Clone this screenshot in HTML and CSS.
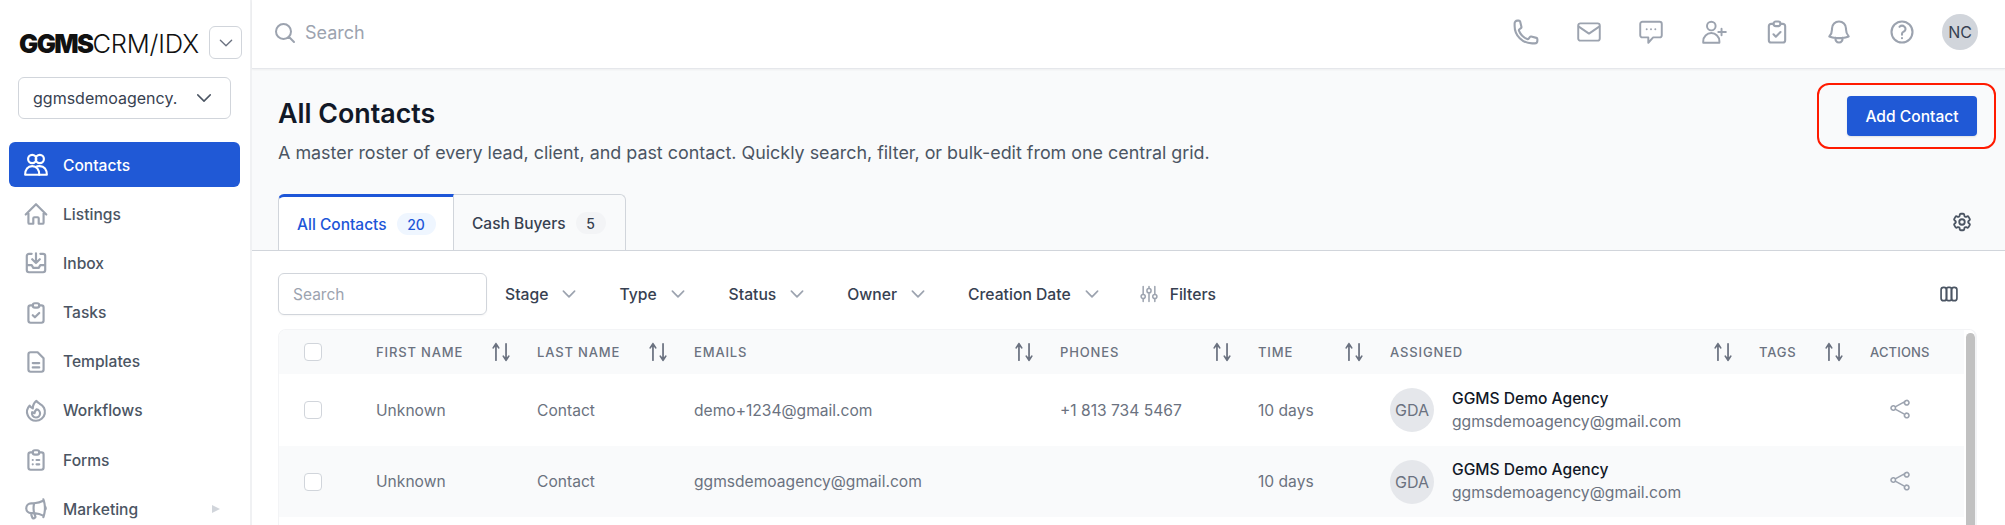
FILE: index.html
```html
<!DOCTYPE html>
<html lang="en">
<head>
<meta charset="utf-8">
<title>All Contacts</title>
<link rel="stylesheet" href="styles.css">
</head>
<body>
<svg class="sprite" aria-hidden="true">
  <symbol id="i-chev" viewBox="0 0 24 24"><path d="M4.500 8.250 12 15.750l7.500-7.500"/></symbol>
  <symbol id="i-users" viewBox="0 0 24 24"><circle cx="8.500" cy="6.500" r="3.800"/><circle cx="15.500" cy="6.500" r="3.800"/><path d="M2 21c0-5 2.500-8 6.500-8s6.500 3 6.500 8z"/><path d="M13 13.200c.8-.2 1.600-.2 2.500-.2 4 0 6.500 3 6.500 8h-7"/></symbol>
  <symbol id="i-home" viewBox="0 0 24 24"><path d="M2.500 12.500 12 3l9.500 9.500M5 10v10a1 1 0 0 0 1 1h3.500v-5a1 1 0 0 1 1-1h3a1 1 0 0 1 1 1v5H18a1 1 0 0 0 1-1V10"/></symbol>
  <symbol id="i-inbox" viewBox="0 0 24 24"><path d="M8 3.500H5.500a2 2 0 0 0-2 2v13a2 2 0 0 0 2 2h13a2 2 0 0 0 2-2v-13a2 2 0 0 0-2-2H16M3.500 14H8l1.500 2.500h5L16 14h4.500M12 3v9m0 0-3.500-3.500M12 12l3.500-3.500"/></symbol>
  <symbol id="i-tasks" viewBox="0 0 24 24"><path d="M9 5H7a2 2 0 0 0-2 2v12a2 2 0 0 0 2 2h10a2 2 0 0 0 2-2V7a2 2 0 0 0-2-2h-2"/><rect x="9" y="3" width="6" height="4" rx="2"/><path d="m9 14 2 2 4-4"/></symbol>
  <symbol id="i-doc" viewBox="0 0 24 24"><path d="M7 3h6.500L19 8.500V19a2 2 0 0 1-2 2H7a2 2 0 0 1-2-2V5a2 2 0 0 1 2-2z"/><path d="M9 13h6M9 17h6"/></symbol>
  <symbol id="i-fire" viewBox="0 0 24 24"><path d="M15.362 5.214A8.252 8.252 0 0 1 12 21 8.250 8.250 0 0 1 6.038 7.048 8.287 8.287 0 0 0 9 9.600a8.983 8.983 0 0 1 3.361-6.867 8.210 8.210 0 0 0 3 2.480z"/><path d="M12 18a3.750 3.750 0 0 0 .495-7.467 5.990 5.990 0 0 0-1.925 3.546 5.974 5.974 0 0 1-2.133-1A3.750 3.750 0 0 0 12 18z"/></symbol>
  <symbol id="i-forms" viewBox="0 0 24 24"><path d="M9 5H7a2 2 0 0 0-2 2v12a2 2 0 0 0 2 2h10a2 2 0 0 0 2-2V7a2 2 0 0 0-2-2h-2"/><rect x="9" y="3" width="6" height="4" rx="2"/><path d="M9 12h.01M12.500 12H15M9 16h.01M12.500 16H15"/></symbol>
  <symbol id="i-mega" viewBox="0 0 24 24"><path d="M10.340 15.840c-.688-.06-1.386-.09-2.090-.09H7.500a4.500 4.500 0 1 1 0-9h.75c.704 0 1.402-.03 2.090-.09m0 9.180c.253.962.584 1.892.985 2.783.247.550.06 1.210-.463 1.511l-.657.380c-.551.318-1.260.117-1.527-.461a20.845 20.845 0 0 1-1.440-4.282m3.102.069a18.030 18.030 0 0 1-.59-4.590c0-1.586.205-3.124.59-4.590m0 9.180a23.848 23.848 0 0 1 8.835 2.535M10.340 6.660a23.847 23.847 0 0 0 8.835-2.535m0 0A23.740 23.740 0 0 0 18.795 3m.38 1.125a23.910 23.910 0 0 1 1.014 5.395m-1.014 8.855c-.118.380-.245.754-.38 1.125m.38-1.125a23.910 23.910 0 0 0 1.014-5.395m0-3.460c.495.413.811 1.035.811 1.730 0 .695-.316 1.317-.811 1.730m0-3.460a24.347 24.347 0 0 1 0 3.460"/></symbol>
  <symbol id="i-search" viewBox="0 0 24 24"><path d="m21 21-5.197-5.197m0 0A7.500 7.500 0 1 0 5.196 5.196a7.500 7.500 0 0 0 10.607 10.607z"/></symbol>
  <symbol id="i-phone" viewBox="0 0 24 24"><path d="M2.250 6.750c0 8.284 6.716 15 15 15h2.250a2.250 2.250 0 0 0 2.250-2.250v-1.372c0-.516-.351-.966-.852-1.091l-4.423-1.106c-.44-.11-.902.055-1.173.417l-.97 1.293c-.282.376-.769.542-1.210.380a12.035 12.035 0 0 1-7.143-7.143c-.162-.441.004-.928.380-1.210l1.293-.97c.363-.271.527-.734.417-1.173L6.963 3.102a1.125 1.125 0 0 0-1.091-.852H4.500A2.250 2.250 0 0 0 2.250 4.500v2.250z"/></symbol>
  <symbol id="i-mail" viewBox="-1 -1 26 26"><rect x="2" y="4" width="20" height="16" rx="2"/><path d="m2.500 7 9.500 6.500L21.500 7"/></symbol>
  <symbol id="i-chat" viewBox="-1 -1 26 26"><path d="M4 2.500h16a2 2 0 0 1 2 2V15a2 2 0 0 1-2 2h-6l-4.500 5v-5H4a2 2 0 0 1-2-2V4.500a2 2 0 0 1 2-2z"/><path d="M8 9.500h.01M12 9.500h.01M16 9.500h.01"/></symbol>
  <symbol id="i-userplus" viewBox="-1 -1 26 26"><circle cx="9.500" cy="6.500" r="4"/><path d="M2 22v-1.500a7.500 7.500 0 0 1 15 0V22z"/><path d="M19 9v6M16 12h7"/></symbol>
  <symbol id="i-bell" viewBox="0 0 24 24"><path d="M14.857 17.082a23.848 23.848 0 0 0 5.454-1.310A8.967 8.967 0 0 1 18 9.750V9A6 6 0 0 0 6 9v.75a8.967 8.967 0 0 1-2.312 6.022c1.733.64 3.560 1.085 5.455 1.310m5.714 0a24.255 24.255 0 0 1-5.714 0m5.714 0a3 3 0 1 1-5.714 0"/></symbol>
  <symbol id="i-help" viewBox="0 0 24 24"><path d="M9.879 7.519c1.171-1.025 3.071-1.025 4.242 0 1.172 1.025 1.172 2.687 0 3.712-.203.179-.43.326-.67.442-.745.361-1.450.999-1.450 1.827v.75M21 12a9 9 0 1 1-18 0 9 9 0 0 1 18 0zm-9 5.250h.008v.008H12v-.008z"/></symbol>
  <symbol id="i-gear" viewBox="0 0 24 24"><path d="M9.594 3.940c.09-.542.56-.94 1.110-.94h2.593c.55 0 1.020.398 1.110.94l.213 1.281c.063.374.313.686.645.870.074.04.147.083.22.127.324.196.72.257 1.075.124l1.217-.456a1.125 1.125 0 0 1 1.370.49l1.296 2.247a1.125 1.125 0 0 1-.26 1.431l-1.003.827c-.293.24-.438.613-.431.992a6.759 6.759 0 0 1 0 .255c-.007.378.138.75.43.99l1.005.828c.424.35.534.954.26 1.430l-1.298 2.247a1.125 1.125 0 0 1-1.369.491l-1.217-.456c-.355-.133-.75-.072-1.076.124a6.570 6.570 0 0 1-.22.128c-.331.183-.581.495-.644.869l-.213 1.280c-.09.543-.56.941-1.110.941h-2.594c-.55 0-1.020-.398-1.110-.94l-.213-1.281c-.062-.374-.312-.686-.644-.87a6.520 6.520 0 0 1-.22-.127c-.325-.196-.72-.257-1.076-.124l-1.217.456a1.125 1.125 0 0 1-1.369-.49l-1.297-2.247a1.125 1.125 0 0 1 .26-1.431l1.004-.827c.292-.24.437-.613.43-.992a6.932 6.932 0 0 1 0-.255c.007-.378-.138-.75-.43-.99l-1.004-.828a1.125 1.125 0 0 1-.26-1.430l1.297-2.247a1.125 1.125 0 0 1 1.370-.491l1.216.456c.356.133.751.072 1.076-.124.072-.044.146-.087.22-.128.332-.183.582-.495.644-.869l.214-1.281z"/><circle cx="12" cy="12" r="3"/></symbol>
  <symbol id="i-sliders" viewBox="0 0 24 24"><path d="M5 3v9M5 18v3M12 3v2M12 11v10M19 3v9M19 18v3"/><circle cx="5" cy="15" r="2.500"/><circle cx="12" cy="8" r="2.500"/><circle cx="19" cy="15" r="2.500"/></symbol>
  <symbol id="i-cols" viewBox="0 0 24 24"><rect x="2.500" y="4" width="6.500" height="16" rx="3"/><rect x="9" y="4" width="6" height="16" rx="2"/><rect x="15" y="4" width="6.500" height="16" rx="3"/></symbol>
  <symbol id="i-sort" viewBox="0 0 24 24"><path d="M6.500 21V3M6.500 3l-3 4.500M6.500 3l3 4.500M17.500 3v18M17.500 21l-3-4.500M17.500 21l3-4.500"/></symbol>
  <symbol id="i-share" viewBox="0 0 24 24"><path d="M7.217 10.907a2.250 2.250 0 1 0 0 2.186m0-2.186c.18.324.283.696.283 1.093s-.103.77-.283 1.093m0-2.186 9.566-5.314m-9.566 7.500 9.566 5.314m0 0a2.250 2.250 0 1 0 3.935 2.186 2.250 2.250 0 0 0-3.935-2.186zm0-10.628a2.250 2.250 0 1 0 3.933-2.185 2.250 2.250 0 0 0-3.933 2.185z"/></symbol>
</svg>

<div class="app">
  <aside class="sidebar">
    <div class="brand-row">
      <div class="logo"><b>GGMS</b><span>CRM/IDX</span></div>
      <button class="brand-toggle"><svg class="ic ic-18"><use href="#i-chev"/></svg></button>
    </div>
    <div class="agency">
      <span class="agency-name">ggmsdemoagency.com</span>
      <svg class="ic ic-20 dark"><use href="#i-chev"/></svg>
    </div>
    <nav class="nav">
      <a class="nav-item active"><svg class="ic ic-26"><use href="#i-users"/></svg>Contacts</a>
      <a class="nav-item"><svg class="ic ic-26"><use href="#i-home"/></svg>Listings</a>
      <a class="nav-item"><svg class="ic ic-26"><use href="#i-inbox"/></svg>Inbox</a>
      <a class="nav-item"><svg class="ic ic-26"><use href="#i-tasks"/></svg>Tasks</a>
      <a class="nav-item"><svg class="ic ic-26"><use href="#i-doc"/></svg>Templates</a>
      <a class="nav-item"><svg class="ic ic-26"><use href="#i-fire"/></svg>Workflows</a>
      <a class="nav-item"><svg class="ic ic-26"><use href="#i-forms"/></svg>Forms</a>
      <a class="nav-item"><svg class="ic ic-26"><use href="#i-mega"/></svg>Marketing<i class="caret"></i></a>
    </nav>
  </aside>

  <div class="main">
    <header class="topbar">
      <div class="global-search"><svg class="ic ic-24"><use href="#i-search"/></svg><span>Search</span></div>
      <div class="top-icons">
        <svg class="ic ic-28"><use href="#i-phone"/></svg>
        <svg class="ic ic-28"><use href="#i-mail"/></svg>
        <svg class="ic ic-28"><use href="#i-chat"/></svg>
        <svg class="ic ic-28"><use href="#i-userplus"/></svg>
        <svg class="ic ic-28"><use href="#i-tasks"/></svg>
        <svg class="ic ic-28"><use href="#i-bell"/></svg>
        <svg class="ic ic-28"><use href="#i-help"/></svg>
      </div>
      <div class="avatar-me">NC</div>
    </header>

    <section class="page-head">
      <div class="title-row">
        <div>
          <h1>All Contacts</h1>
          <p>A master roster of every lead, client, and past contact. Quickly search, filter, or bulk-edit from one central grid.</p>
        </div>
        <div class="add-wrap">
          <button class="add-btn">Add Contact</button>
          <span class="highlight"></span>
        </div>
      </div>
      <div class="tabs-row">
        <div class="tabs">
          <div class="tab current">All Contacts<span class="count">20</span></div>
          <div class="tab">Cash Buyers<span class="count">5</span></div>
        </div>
        <svg class="ic ic-22 dark gear"><use href="#i-gear"/></svg>
      </div>
    </section>

    <section class="content">
      <div class="toolbar">
        <div class="search-box">Search</div>
        <div class="filter f-stage">Stage<svg class="ic ic-18"><use href="#i-chev"/></svg></div>
        <div class="filter f-type">Type<svg class="ic ic-18"><use href="#i-chev"/></svg></div>
        <div class="filter f-status">Status<svg class="ic ic-18"><use href="#i-chev"/></svg></div>
        <div class="filter f-owner">Owner<svg class="ic ic-18"><use href="#i-chev"/></svg></div>
        <div class="filter f-date">Creation Date<svg class="ic ic-18"><use href="#i-chev"/></svg></div>
        <div class="filter f-more"><svg class="ic ic-20"><use href="#i-sliders"/></svg>Filters</div>
        <svg class="ic ic-20 dark cols"><use href="#i-cols"/></svg>
      </div>

      <div class="card">
        <div class="grid">
          <div class="row head">
            <div class="cell"><span class="check"></span></div>
            <div class="cell th">First Name<svg class="ic sort"><use href="#i-sort"/></svg></div>
            <div class="cell th">Last Name<svg class="ic sort"><use href="#i-sort"/></svg></div>
            <div class="cell th">Emails<svg class="ic sort"><use href="#i-sort"/></svg></div>
            <div class="cell th">Phones<svg class="ic sort"><use href="#i-sort"/></svg></div>
            <div class="cell th">Time<svg class="ic sort"><use href="#i-sort"/></svg></div>
            <div class="cell th">Assigned<svg class="ic sort"><use href="#i-sort"/></svg></div>
            <div class="cell th">Tags<svg class="ic sort"><use href="#i-sort"/></svg></div>
            <div class="cell th th-tight">Actions</div>
          </div>
          <div class="row body">
            <div class="cell"><span class="check"></span></div>
            <div class="cell">Unknown</div>
            <div class="cell">Contact</div>
            <div class="cell">demo+1234@gmail.com</div>
            <div class="cell">+1 813 734 5467</div>
            <div class="cell">10 days</div>
            <div class="cell assigned">
              <span class="avatar">GDA</span>
              <span class="who"><b>GGMS Demo Agency</b><small>ggmsdemoagency@gmail.com</small></span>
            </div>
            <div class="cell"></div>
            <div class="cell action"><svg class="ic ic-24"><use href="#i-share"/></svg></div>
          </div>
          <div class="row body alt">
            <div class="cell"><span class="check"></span></div>
            <div class="cell">Unknown</div>
            <div class="cell">Contact</div>
            <div class="cell">ggmsdemoagency@gmail.com</div>
            <div class="cell"></div>
            <div class="cell">10 days</div>
            <div class="cell assigned">
              <span class="avatar">GDA</span>
              <span class="who"><b>GGMS Demo Agency</b><small>ggmsdemoagency@gmail.com</small></span>
            </div>
            <div class="cell"></div>
            <div class="cell action"><svg class="ic ic-24"><use href="#i-share"/></svg></div>
          </div>
        </div>
        <div class="track"><span class="thumb"></span></div>
      </div>
    </section>
  </div>
</div>
</body>
</html>
```

FILE: styles.css
```css
* { box-sizing: border-box; }
html, body { margin: 0; height: 525px; overflow: hidden; }
body { font-family: Inter, "Liberation Sans", sans-serif; color: #374151; background: #fff; }
.sprite { display: none; }

.ic { fill: none; stroke: #9ca3af; stroke-width: 2; stroke-linecap: round; stroke-linejoin: round; flex: none; display: block; }
.ic-18 { width: 18px; height: 18px; }
.ic-20 { width: 20px; height: 20px; }
.ic-22 { width: 22px; height: 22px; }
.ic-24 { width: 24px; height: 24px; }
.ic-26 { width: 26px; height: 26px; }
.ic-28 { width: 28px; height: 28px; }
.ic.dark { stroke: #4b5563; }

.app { display: flex; height: 525px; }

/* sidebar */
.sidebar { width: 252px; flex: none; border-right: 2px solid #f0f1f3; padding: 26px 0 0 9px; background: #fff; }
.brand-row { display: flex; align-items: center; height: 33px; padding-left: 10px; }
.logo { width: 180px; padding-top: 1px; font-size: 25.500px; color: #111; white-space: nowrap; line-height: 33px; }
.logo b { font-weight: 900; letter-spacing: -1.600px; }
.logo span { font-weight: 300; letter-spacing: -.2px; }
.brand-toggle { width: 33px; height: 33px; margin-left: 10px; padding: 0; display: flex; align-items: center; justify-content: center; background: #fff; border: 1px solid #d1d5db; border-radius: 6px; }
.brand-toggle .ic { stroke: #6b7280; stroke-width: 1.8; }
.agency { margin: 18px 0 0 9px; width: 213px; height: 42px; display: flex; align-items: center; padding: 0 24px 0 14px; border: 1px solid #d1d5db; border-radius: 6px; font-size: 16px; color: #374151; gap: 17px; }
.agency-name { width: 144px; overflow: hidden; white-space: nowrap; flex: none; }
.agency .ic { stroke-width: 1.8; }
.nav { display: flex; flex-direction: column; gap: 4.200px; margin-top: 23px; width: 231px; }
.nav-item { height: 45px; display: flex; align-items: center; gap: 14px; padding: 1px 0 0 14px; border-radius: 6px; font-size: 15.600px; font-weight: 500; color: #4b5563; }
.nav-item.active { background: #2059d6; color: #fff; }
.nav-item.active .ic { stroke: #fff; }
.caret { margin-left: auto; margin-right: 20px; width: 0; height: 0; border-left: 8px solid #d1d5db; border-top: 4px solid transparent; border-bottom: 4px solid transparent; }

/* main */
.main { flex: 1; min-width: 0; display: flex; flex-direction: column; background: #f9fafb; }
.topbar { height: 69px; flex: none; display: flex; align-items: center; background: #fff; border-bottom: 1px solid #e5e7eb; box-shadow: 0 1px 2px rgba(0,0,0,.05); padding: 0 27px 4px 21px; }
.global-search { display: flex; align-items: center; gap: 8px; font-size: 18px; color: #9ca3af; margin-top: 1px; }
.top-icons { margin-left: auto; display: flex; gap: 34.700px; }
.top-icons .ic { stroke-width: 1.800; }
.avatar-me { margin-left: 26px; width: 36px; height: 36px; border-radius: 50%; background: #d1d5db; display: flex; align-items: center; justify-content: center; font-size: 16px; color: #374151; }

.page-head { flex: none; padding: 27px 28px 0 26px; height: 181px; display: flex; flex-direction: column; }
.title-row { display: flex; justify-content: space-between; align-items: flex-start; }
h1 { margin: 1px 0 12px; font-size: 26.800px; line-height: 32px; font-weight: 600; color: #111827; }
.page-head p { margin: 0; font-size: 17.900px; line-height: 24px; color: #4b5563; }
.add-wrap { position: relative; }
.add-btn { display: block; width: 130px; height: 40px; border: 0; border-radius: 4px; background: #2059d6; color: #fff; font: 500 15.600px Inter, sans-serif; box-shadow: 0 1px 2px rgba(0,0,0,.1); }
.highlight { position: absolute; left: -30px; top: -13px; width: 179px; height: 66px; border: 2.500px solid #ff1a00; border-radius: 12px; pointer-events: none; }

.tabs-row { display: flex; align-items: flex-end; justify-content: space-between; margin-top: 29px; height: 56px; }
.tabs { display: flex; height: 56px; }
.tab { width: 172px; display: flex; align-items: center; padding: 1px 0 0 18px; gap: 10px; font-size: 15.500px; font-weight: 500; color: #374151; border: 1px solid #d1d5db; border-left: 0; border-bottom: 0; border-radius: 0 6px 0 0; }
.tab.current { width: 176px; background: #fff; color: #1d56d8; border: 1px solid #d1d5db; border-top: 3px solid #1d56d8; border-bottom: 0; border-radius: 6px 0 0 0; }
.count { min-width: 30px; height: 22px; padding: 0 9px; border-radius: 11px; background: #f3f4f6; font-size: 14px; display: flex; align-items: center; justify-content: center; }
.current .count { background: #eff6ff; min-width: 39px; }
.gear { margin: 0 4px 17px 0; }

.content { flex: 1; background: #fff; border-top: 1px solid #d1d5db; padding: 22px 28px 0 26px; }
.toolbar { display: flex; align-items: center; height: 42px; font-size: 15.700px; font-weight: 500; color: #374151; }
.search-box { width: 209px; height: 42px; display: flex; align-items: center; padding-left: 14px; border: 1px solid #d1d5db; border-radius: 6px; font-size: 15.500px; font-weight: 400; color: #9ca3af; box-shadow: 0 1px 2px rgba(0,0,0,.04); }
.filter { display: flex; align-items: center; gap: 12px; }
.filter .ic { stroke-width: 2.200; }
.f-stage { margin-left: 18px; }
.f-type { margin-left: 41px; }
.f-status { margin-left: 42px; }
.f-owner { margin-left: 41px; }
.f-date { margin-left: 41px; }
.f-more { margin-left: 38px; gap: 11px; }
.f-more .ic { stroke-width: 1.800; }
.cols { margin-left: auto; margin-right: 18px; }

.card { margin-top: 14px; display: flex; min-height: 220px; border: 1px solid #f3f4f6; border-right-width: 2px; border-radius: 8px 8px 0 0; overflow: hidden; }
.grid { width: 1685px; flex: none; }
.row { display: grid; grid-template-columns: 81px 161px 157px 366px 198px 132px 369px 111px 110px; height: 71.500px; background: #fff; font-size: 15.600px; color: #6b7280; }
.row.body { padding-top: 1px; }
.row.alt { background: #f9fafb; }
.row.head { height: 44px; background: #f9fafb; }
.cell { display: flex; align-items: center; padding-left: 16px; white-space: nowrap; min-width: 0; }
.cell:first-child { padding-left: 25px; }
.check { width: 18px; height: 18px; border: 1px solid #d1d5db; border-radius: 4px; background: #fff; }
.th { font-size: 13px; font-weight: 500; letter-spacing: .85px; text-transform: uppercase; color: #6b7280; padding-right: 9px; justify-content: space-between; }
.th-tight { letter-spacing: .15px; }
.sort { width: 22px; height: 22px; stroke: #6b7280; stroke-width: 1.900; }
.assigned { gap: 18px; }
.avatar { width: 44px; height: 44px; border-radius: 50%; background: #e5e7eb; display: flex; align-items: center; justify-content: center; font-size: 16px; color: #6b7280; flex: none; }
.who { display: flex; flex-direction: column; gap: 2px; }
.who b { font-size: 15.600px; font-weight: 500; color: #111827; line-height: 21px; }
.who small { font-size: 15.700px; color: #6b7280; line-height: 22px; }
.action { padding-left: 34px; padding-bottom: 4px; }
.action .ic { stroke: #9ca3af; stroke-width: 1.600; }
.track { width: 13px; flex: none; background: #fff; padding: 3px 2px 0; }
.thumb { display: block; height: 100%; border-radius: 5px 5px 0 0; background: #c1c1c1; }
```
